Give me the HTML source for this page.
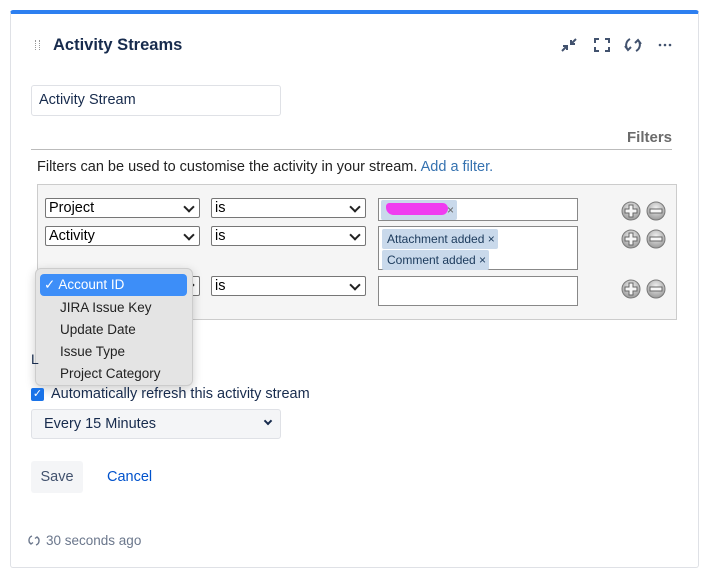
<!DOCTYPE html>
<html><head><style>
*{box-sizing:border-box;margin:0;padding:0}
body{width:715px;height:580px;background:#fff;font-family:"Liberation Sans",sans-serif;color:#172b4d;position:relative;overflow:hidden}
.a{position:absolute}
.card{left:10px;top:10px;width:689px;height:558px;border:1px solid #dfe1e6;border-top:4px solid #2d7ff0;border-radius:3px}
.sel{position:absolute;height:20px;border:1px solid #767676;border-radius:2px;background:#fff;font-size:14.5px;line-height:18px;padding-left:3px;color:#000}
.sel:after{content:"";position:absolute;right:6px;top:4px;width:6px;height:6px;border-right:2px solid #222;border-bottom:2px solid #222;transform:rotate(45deg)}
.box{position:absolute;border:1px solid #888;background:#fff}
.tag{position:absolute;background:#c9d9eb;border-radius:2px;font-size:12px;color:#1b3a5c;height:20px;line-height:20px;padding:0 3px 0 5px}
.pm{position:absolute}
.dd{font-size:13.5px;color:#222;position:absolute;left:60px}
</style></head><body>
<svg width="0" height="0" style="position:absolute"><defs>
<radialGradient id="g" cx="50%" cy="35%" r="65%"><stop offset="0" stop-color="#f2f2f2"/><stop offset="1" stop-color="#9a9a9a"/></radialGradient>
<g id="plus"><circle cx="10" cy="10" r="9" fill="url(#g)" stroke="#7a7a7a"/><path d="M8 4h4v4h4v4h-4v4H8v-4H4V8h4z" fill="#f6f6f6" stroke="#666" stroke-width="1"/></g>
<g id="minus"><circle cx="10" cy="10" r="9" fill="url(#g)" stroke="#7a7a7a"/><rect x="4" y="8" width="12" height="4" fill="#f6f6f6" stroke="#666" stroke-width="1"/></g>
</defs></svg>
<div class="a card"></div>
<div class="a" style="left:35px;top:40px;width:5px;height:10px;border-left:1.5px dotted #999;border-right:1.5px dotted #999"></div>
<div class="a" style="left:53px;top:36px;font-size:16.5px;font-weight:bold">Activity Streams</div>
<svg class="a" style="left:558px;top:35px" width="120" height="20" viewBox="0 0 120 20" fill="none" stroke="#42526e" stroke-width="2">
<path d="M4 16l5-5M5 11h4v4M18 4l-5 5M13 5v4h4"/>
<path d="M37 8V4h4M47 4h4v4M51 12v4h-4M41 16h-4v-4"/>
<path d="M72 4a7 7 0 0 0-2 11M67 11l3 4 3-3M78 16a7 7 0 0 0 2-11M83 9l-3-4-3 3"/>
<circle cx="102" cy="10" r="1.3" fill="#42526e" stroke="none"/><circle cx="107" cy="10" r="1.3" fill="#42526e" stroke="none"/><circle cx="112" cy="10" r="1.3" fill="#42526e" stroke="none"/>
</svg>
<div class="a" style="left:31px;top:85px;width:250px;height:31px;border:1px solid #dfe1e6;border-radius:3px;font-size:14.5px;line-height:29px;padding-left:7px">Activity Stream</div>
<div class="a" style="left:560px;top:129px;width:112px;text-align:right;font-size:15px;font-weight:bold;color:#6b6b6b">Filters</div>
<div class="a" style="left:31px;top:149px;width:641px;height:1px;background:#bbb"></div>
<div class="a" style="left:37px;top:159px;font-size:14.5px;color:#222">Filters can be used to customise the activity in your stream. <span style="color:#3572b0">Add a filter.</span></div>
<div class="a" style="left:37px;top:184px;width:640px;height:136px;background:#f5f5f5;border:1px solid #ccc"></div>
<div class="sel" style="left:45px;top:198px;width:155px">Project</div>
<div class="sel" style="left:211px;top:198px;width:155px">is</div>
<div class="box" style="left:378px;top:198px;width:200px;height:23px"></div>
<div class="tag" style="left:381px;top:200px;width:76px;color:#666;text-align:right">×</div>
<div class="a" style="left:386px;top:203px;width:62px;height:12px;background:#f03cf0;border-radius:6px 10px 12px 14px"></div>
<div class="sel" style="left:45px;top:226px;width:155px">Activity</div>
<div class="sel" style="left:211px;top:226px;width:155px">is</div>
<div class="box" style="left:378px;top:226px;width:200px;height:44px"></div>
<div class="tag" style="left:382px;top:229px">Attachment added ×</div>
<div class="tag" style="left:382px;top:250px">Comment added ×</div>
<div class="sel" style="left:45px;top:276px;width:155px"></div>
<div class="sel" style="left:211px;top:276px;width:155px">is</div>
<div class="box" style="left:378px;top:276px;width:200px;height:30px"></div>
<svg class="pm" style="left:621px;top:201px" width="20" height="20"><use href="#plus"/></svg>
<svg class="pm" style="left:646px;top:201px" width="20" height="20"><use href="#minus"/></svg>
<svg class="pm" style="left:621px;top:229px" width="20" height="20"><use href="#plus"/></svg>
<svg class="pm" style="left:646px;top:229px" width="20" height="20"><use href="#minus"/></svg>
<svg class="pm" style="left:621px;top:279px" width="20" height="20"><use href="#plus"/></svg>
<svg class="pm" style="left:646px;top:279px" width="20" height="20"><use href="#minus"/></svg>
<div class="a" style="left:35px;top:268px;width:158px;height:118px;background:#e4e4e4;border:1px solid #ccc;border-radius:6px;box-shadow:0 3px 10px rgba(0,0,0,.2)"></div>
<div class="a" style="left:40px;top:274px;width:147px;height:22px;background:#3d8ef8;border-radius:4px"></div>
<div class="a" style="left:44px;top:277px;font-size:13.5px;color:#fff">✓ Account ID</div>
<div class="dd" style="top:300px">JIRA Issue Key</div>
<div class="dd" style="top:322px">Update Date</div>
<div class="dd" style="top:344px">Issue Type</div>
<div class="dd" style="top:366px">Project Category</div>
<div class="a" style="left:31px;top:351px;font-size:14px">L</div>
<div class="a" style="left:31px;top:388px;width:13px;height:13px;background:#1a73e8;border-radius:2px;color:#fff;font-size:11px;line-height:13px;text-align:center">✓</div>
<div class="a" style="left:51px;top:386px;font-size:14.5px">Automatically refresh this activity stream</div>
<div class="a" style="left:31px;top:409px;width:250px;height:30px;background:#f4f5f7;border:1px solid #dfe1e6;border-radius:3px;font-size:14.5px;line-height:28px;padding-left:12px">Every 15 Minutes</div>
<div class="a" style="left:265px;top:418px;width:6px;height:6px;border-right:2px solid #172b4d;border-bottom:2px solid #172b4d;transform:rotate(45deg)"></div>
<div class="a" style="left:31px;top:461px;width:52px;height:32px;background:#f4f5f7;border-radius:3px;font-size:14.5px;line-height:32px;text-align:center;color:#42526e">Save</div>
<div class="a" style="left:107px;top:469px;font-size:14.5px;color:#0052cc">Cancel</div>
<svg class="a" style="left:27px;top:534px" width="14" height="13" viewBox="0 0 14 13" fill="none" stroke="#6b778c" stroke-width="1.4"><path d="M5 2a4.5 4.5 0 0 0-1 8M2 8l2 2 2-1.5M9 11a4.5 4.5 0 0 0 1-8M12 5l-2-2-2 1.5"/></svg>
<div class="a" style="left:46px;top:533px;font-size:13.5px;color:#6b778c">30 seconds ago</div>
</body></html>
